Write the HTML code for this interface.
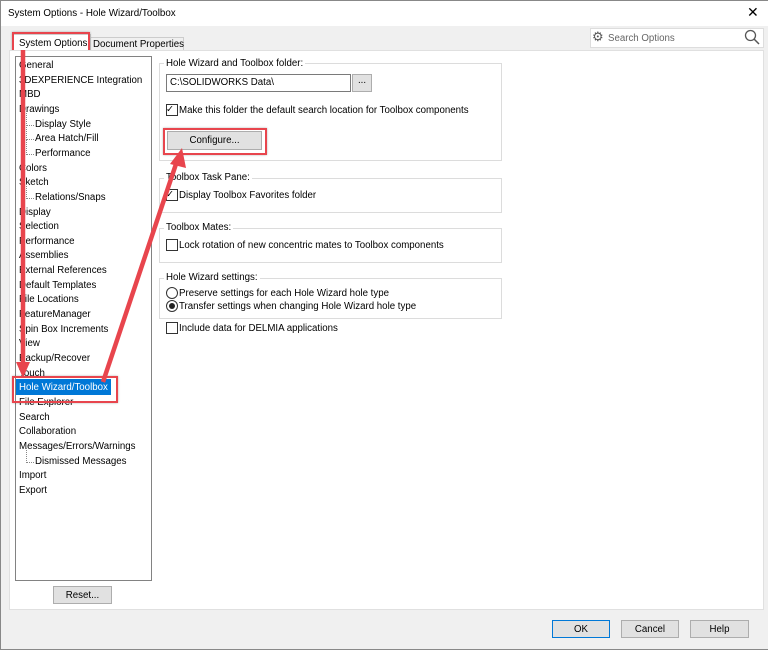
<!DOCTYPE html>
<html><head><style>
body{margin:0;width:768px;height:649px;background:#f0f0f0;font-family:"Liberation Sans",sans-serif;font-size:9.7px;color:#000;position:relative;overflow:hidden}
.a{position:absolute;white-space:nowrap;line-height:14px;transform:translateY(1px)}
.box{position:absolute;border:1px solid #dcdcdc}
.btn{position:absolute;background:#e1e1e1;border:1px solid #adadad;text-align:center;line-height:17px;box-sizing:border-box}
.cb{position:absolute;width:10px;height:10px;border:1px solid #333;background:#fff}
.rd{position:absolute;width:10px;height:10px;border:1px solid #333;border-radius:50%;background:#fff}
.red{position:absolute;border:2px solid #e8454d;box-shadow:0 0 2px rgba(0,0,0,.3)}
</style></head><body>
<div style="position:absolute;left:0;top:0;width:768px;height:26px;background:#fff"></div>
<div style="position:absolute;left:0;top:0;width:767px;height:648px;border:1px solid #888"></div>
<div class="a" style="left:8px;top:6px;font-size:9.8px">System Options - Hole Wizard/Toolbox</div>
<div class="a" style="left:747px;top:4px;font-size:14px">✕</div>
<div style="position:absolute;left:13px;top:34px;width:76px;height:17px;background:#fff;border:1px solid #ccc;border-bottom:none"></div>
<div class="a" style="left:19px;top:36px">System Options</div>
<div style="position:absolute;left:90px;top:37px;width:92px;height:13px;border:1px solid #ccc;border-bottom:none"></div>
<div class="a" style="left:93px;top:37px">Document Properties</div>
<div class="red" style="left:12px;top:32px;width:74px;height:17px"></div>
<div style="position:absolute;left:590px;top:28px;width:172px;height:18px;background:#fff;border:1px solid #ddd"></div>
<div class="a" style="left:592px;top:29px;font-size:13px;color:#555">⚙</div>
<div class="a" style="left:608px;top:31px;color:#666">Search Options</div>
<svg style="position:absolute;left:744px;top:29px" width="16" height="16"><circle cx="6.5" cy="6.5" r="5" fill="none" stroke="#555" stroke-width="1.3"/><line x1="10" y1="10" x2="15" y2="15" stroke="#555" stroke-width="1.5"/></svg>
<div style="position:absolute;left:9px;top:50px;width:753px;height:558px;background:#fff;border:1px solid #e0e0e0"></div>
<div style="position:absolute;left:15px;top:56px;width:135px;height:523px;border:1px solid #828282;background:#fff"></div>
<div id="tree"></div>
<div style="position:absolute;left:16px;top:379px;width:95px;height:16px;background:#0078d7"></div>
<div class="red" style="left:12px;top:376px;width:102px;height:23px"></div>
<div class="box" style="left:159px;top:63px;width:341px;height:96px"></div>
<div class="a" style="left:164px;top:56px;background:#fff;padding:0 2px">Hole Wizard and Toolbox folder:</div>
<div style="position:absolute;left:166px;top:74px;width:183px;height:16px;border:1px solid #7a7a7a"></div>
<div class="a" style="left:170px;top:75px">C:\SOLIDWORKS Data\</div>
<div class="btn" style="left:352px;top:74px;width:20px;height:18px;line-height:12px">...</div>
<div class="cb" style="left:166px;top:104px"></div><div class="a" style="left:166px;top:102px">✓</div>
<div class="a" style="left:179px;top:103px">Make this folder the default search location for Toolbox components</div>
<div class="btn" style="left:167px;top:131px;width:95px;height:19px;line-height:18px">Configure...</div>
<div class="red" style="left:163px;top:128px;width:100px;height:23px"></div>
<div class="box" style="left:159px;top:178px;width:341px;height:33px"></div>
<div class="a" style="left:164px;top:170px;background:#fff;padding:0 2px">Toolbox Task Pane:</div>
<div class="cb" style="left:166px;top:189px"></div><div class="a" style="left:166px;top:187px">✓</div>
<div class="a" style="left:179px;top:188px">Display Toolbox Favorites folder</div>
<div class="box" style="left:159px;top:228px;width:341px;height:33px"></div>
<div class="a" style="left:164px;top:220px;background:#fff;padding:0 2px">Toolbox Mates:</div>
<div class="cb" style="left:166px;top:239px"></div>
<div class="a" style="left:179px;top:238px">Lock rotation of new concentric mates to Toolbox components</div>
<div class="box" style="left:159px;top:278px;width:341px;height:39px"></div>
<div class="a" style="left:164px;top:270px;background:#fff;padding:0 2px">Hole Wizard settings:</div>
<div class="rd" style="left:166px;top:287px"></div>
<div class="a" style="left:179px;top:286px">Preserve settings for each Hole Wizard hole type</div>
<div class="rd" style="left:166px;top:300px"></div><div style="position:absolute;left:169px;top:303px;width:6px;height:6px;border-radius:50%;background:#222"></div>
<div class="a" style="left:179px;top:299px">Transfer settings when changing Hole Wizard hole type</div>
<div class="cb" style="left:166px;top:322px"></div>
<div class="a" style="left:179px;top:321px">Include data for DELMIA applications</div>
<svg style="position:absolute;left:0;top:0" width="768" height="649">
<g stroke="#e8454d" stroke-width="4.5" fill="#e8454d">
<line x1="23" y1="50" x2="23" y2="364"/>
<polygon points="16,362 30,362 23,378" stroke="none"/>
<line x1="103" y1="382" x2="176" y2="164"/>
<polygon points="170,164 186,168 182,148" stroke="none"/>
</g></svg>
<div class="btn" style="left:53px;top:586px;width:59px;height:18px">Reset...</div>
<div class="btn" style="left:552px;top:620px;width:58px;height:18px;border:1px solid #0078d7">OK</div>
<div class="btn" style="left:621px;top:620px;width:58px;height:18px">Cancel</div>
<div class="btn" style="left:690px;top:620px;width:59px;height:18px">Help</div>
<script>
var items=["General","3DEXPERIENCE Integration","MBD","Drawings","*Display Style","*Area Hatch/Fill","*Performance","Colors","Sketch","*Relations/Snaps","Display","Selection","Performance","Assemblies","External References","Default Templates","File Locations","FeatureManager","Spin Box Increments","View","Backup/Recover","Touch","Hole Wizard/Toolbox","File Explorer","Search","Collaboration","Messages/Errors/Warnings","*Dismissed Messages","Import","Export"];
var h="";items.forEach(function(t,i){var y=Math.round(65+i*14.65)-7;var ind=t[0]=="*";if(ind){t=t.slice(1);h+='<div style="position:absolute;left:26px;top:'+(y-6)+'px;height:14px;width:7px;border-left:1px dotted #888;border-bottom:1px dotted #888"></div>';}
h+='<div class="a" style="left:'+(ind?35:19)+'px;top:'+y+'px;'+(t=="Hole Wizard/Toolbox"?'color:#fff;z-index:2':'')+'">'+t+'</div>';});
document.getElementById("tree").innerHTML=h;
</script>
</body></html>
